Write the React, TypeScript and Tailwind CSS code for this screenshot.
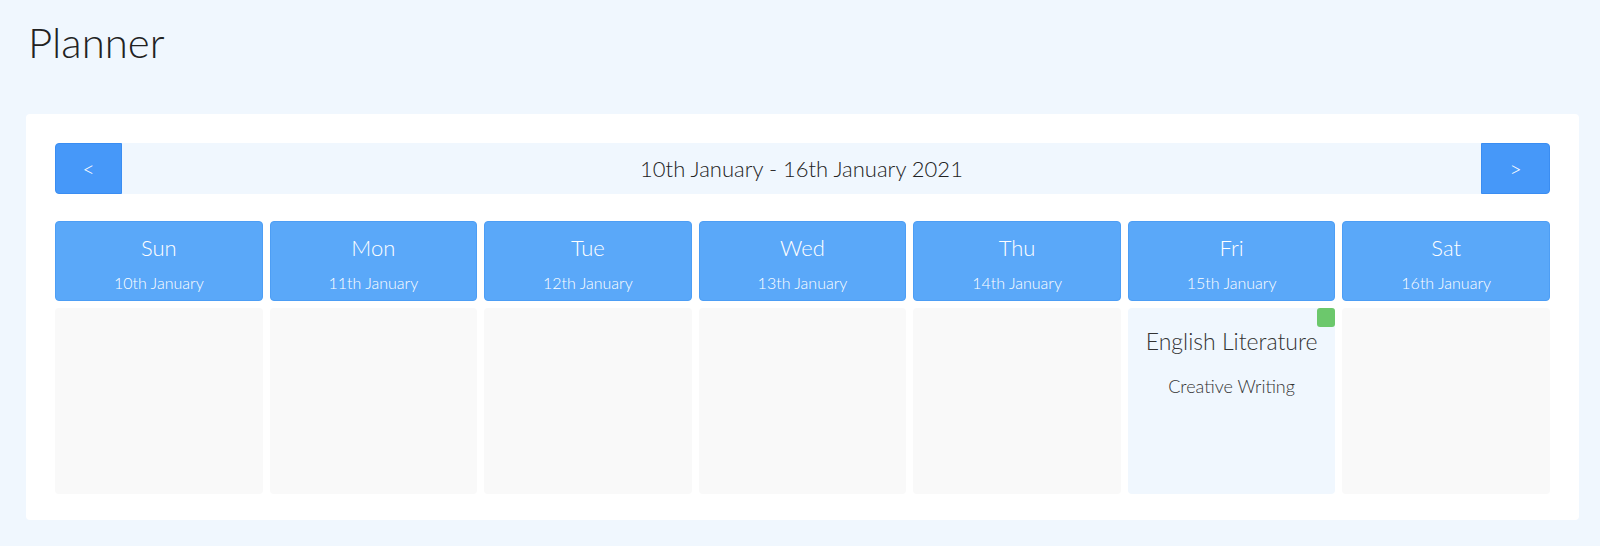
const days = [
  { name: 'Sun', date: '10th January' },
  { name: 'Mon', date: '11th January' },
  { name: 'Tue', date: '12th January' },
  { name: 'Wed', date: '13th January' },
  { name: 'Thu', date: '14th January' },
  { name: 'Fri', date: '15th January', lesson: { subject: 'English Literature', topic: 'Creative Writing' } },
  { name: 'Sat', date: '16th January' },
]

export default function App() {
  return (
    <div className="min-h-[546px] bg-[#f0f7fe] pl-[26px] pr-[21px] pt-[17px] pb-[26px] font-['Lato',sans-serif] font-light">
      <h1 className="pl-[2px] text-[42px] font-light leading-[50px] text-[#222]">Planner</h1>

      <div className="mt-[47px] rounded bg-white px-[29px] pt-[29px] pb-[26px]">
        {/* week switcher */}
        <div className="flex h-[51px] items-stretch rounded bg-[#f0f7fe]">
          <button className="w-[67px] rounded-l border border-[#3a8df2] bg-[#4698f9] text-[21px] font-light text-white">&lt;</button>
          <div className="flex flex-1 items-center justify-center text-[22px] font-light text-[#222]">
            10th January - 16th January 2021
          </div>
          <button className="w-[69px] rounded-r border border-[#3a8df2] bg-[#4698f9] text-[21px] font-light text-white">&gt;</button>
        </div>

        <div className="mt-[27px] grid grid-cols-7 gap-x-[7px]">
          {days.map((d) => (
            <div key={d.name} className="flex flex-col gap-[7px]">
              <div className="flex h-[80px] flex-col items-center rounded border border-[#4d9ef5] bg-[#5aa8f9] pt-[13px] text-white">
                <span className="text-[22px] font-light leading-[26px]">{d.name}</span>
                <span className="mt-[12px] text-[16px] font-light leading-[19px]">{d.date}</span>
              </div>
              {d.lesson ? (
                <div className="relative flex h-[186px] flex-col items-center rounded bg-[#f0f7fe] pt-[19px] text-[#333]">
                  <span className="absolute right-0 top-0 h-[19px] w-[18px] rounded-[3px] bg-[#6cc86c]" />
                  <span className="text-[23px] font-light leading-[28px]">{d.lesson.subject}</span>
                  <span className="mt-[20px] text-[18px] font-light leading-[22px]">{d.lesson.topic}</span>
                </div>
              ) : (
                <div className="h-[186px] rounded bg-[#f9f9f9]" />
              )}
            </div>
          ))}
        </div>
      </div>
    </div>
  )
}
